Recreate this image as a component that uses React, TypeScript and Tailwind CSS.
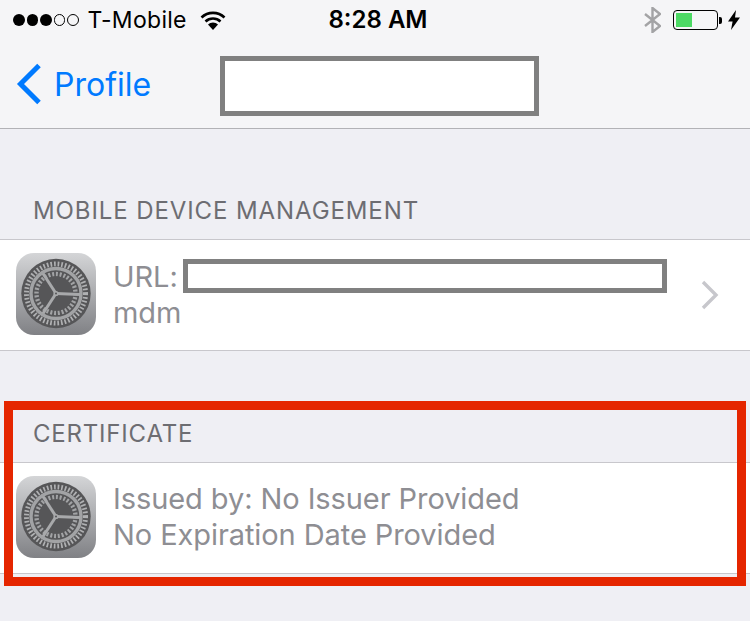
const font = "[font-family:Inter,'Liberation_Sans',sans-serif]";

function SettingsIcon() {
  const cx = 40;
  const cy = 40.5;
  return (
    <svg width="80" height="82" viewBox="0 0 80 82" className="shrink-0 -mt-[2px]">
      <defs>
        <linearGradient id="gearBg" x1="0" y1="0" x2="0" y2="1">
          <stop offset="0" stopColor="#d4d5d7" />
          <stop offset="1" stopColor="#808185" />
        </linearGradient>
      </defs>
      <rect width="80" height="82" rx="18" fill="url(#gearBg)" />
      <circle cx={cx} cy={cy} r="34.7" fill="#565658" />
      <circle cx={cx} cy={cy} r="29.5" fill="none" stroke="#b0b1b3" strokeWidth="5" strokeDasharray="1.7 1.9" />
      <circle cx={cx} cy={cy} r="27" fill="#565658" />
      <circle cx={cx} cy={cy} r="25" fill="none" stroke="#a2a3a5" strokeWidth="3.4" />
      <circle cx={cx} cy={cy} r="19.5" fill="none" stroke="#a2a3a5" strokeWidth="4.4" strokeDasharray="2 1.8" />
      <circle cx={cx} cy={cy} r="17" fill="#565658" />
      <g stroke="#a8a9ab" strokeWidth="3" strokeLinecap="butt">
        <line x1={cx} y1={cy} x2={cx + 24} y2={cy + 1} />
        <line x1={cx} y1={cy} x2={cx - 13} y2={cy + 20} />
        <line x1={cx} y1={cy} x2={cx - 13} y2={cy - 20} />
      </g>
      <circle cx={cx} cy={cy} r="2.6" fill="#a8a9ab" />
      <circle cx={cx} cy={cy} r="1" fill="#565658" />
    </svg>
  );
}

function StatusBar() {
  return (
    <div className="h-[40px] flex items-center justify-between pl-[13px] pr-[10px] text-black">
      <div className="flex items-center w-[300px]">
        <div className="flex gap-[2px]">
          <span className="w-[11.5px] h-[11.5px] rounded-full bg-black" />
          <span className="w-[11.5px] h-[11.5px] rounded-full bg-black" />
          <span className="w-[11.5px] h-[11.5px] rounded-full bg-black" />
          <span className="w-[11.5px] h-[11.5px] rounded-full border border-black" />
          <span className="w-[11.5px] h-[11.5px] rounded-full border border-black" />
        </div>
        <span className="ml-[9px] text-[23px] leading-none tracking-[0.3px]">T-Mobile</span>
        <svg width="26" height="19" viewBox="0 0 26 19" className="ml-[13px]">
          <path d="M1.5 6.5a16.5 16.5 0 0 1 23 0" fill="none" stroke="#000" strokeWidth="2.6" />
          <path d="M5.5 10.5a11 11 0 0 1 15 0" fill="none" stroke="#000" strokeWidth="2.6" />
          <path d="M8 13.6a7 7 0 0 1 10 0L13 19z" fill="#000" />
        </svg>
      </div>
      <span className="text-[24px] leading-none font-semibold ml-[3px]">8:28 AM</span>
      <div className="flex items-center w-[300px] justify-end">
        <svg width="17" height="26" viewBox="0 0 17 26" fill="none" stroke="#a3a3a5" strokeWidth="2.4">
          <path d="M1 7l15 12-7.5 6V1L16 7 1 19" />
        </svg>
        <div className="ml-[12px] w-[45px] h-[20px] rounded-[4px] border border-black p-[2px] bg-transparent">
          <div className="w-[16px] h-full bg-[#4cd964]" />
        </div>
        <span className="w-[3px] h-[7px] bg-black rounded-r-[2px] ml-[1px]" />
        <svg width="12" height="20" viewBox="0 0 12 20" className="ml-[6px]">
          <path d="M8 0L0 11.5h4.6L3 20l9-12.5H7z" fill="#000" />
        </svg>
      </div>
    </div>
  );
}

export default function App() {
  return (
    <div className={`relative w-[750px] h-[621px] overflow-hidden bg-[#efeff4] ${font}`}>
      <div className="h-[129px] bg-[#f5f5f7] border-b border-[#b2b2b6]">
        <StatusBar />
        <div className="h-[88px] flex items-center">
          <svg width="26" height="42" viewBox="0 0 26 42" className="ml-[16px] -mt-[1px]">
            <path d="M23 2.5L4.5 21 23 39.5" fill="none" stroke="#007aff" strokeWidth="5" />
          </svg>
          <span className="ml-[12px] mt-[1px] text-[#007aff] text-[32px] leading-none">Profile</span>
          <div className="ml-[69px] mt-[3px] w-[319px] h-[60px] bg-white border-[5px] border-[#808080]" />
        </div>
      </div>

      <div className="h-[110px] flex items-end pl-[33px] pb-[16px] text-[#6d6d72] text-[24px] leading-none tracking-[0.9px]">
        MOBILE DEVICE MANAGEMENT
      </div>
      <div className="h-[112px] bg-white border-y border-[#c8c7cc] flex items-center pl-[16px] pr-[30px]">
        <SettingsIcon />
        <div className="ml-[17px] flex-1 text-[#8e8e93] text-[29px] leading-[36px] -mt-[1px] tracking-[-0.08px]">
          <div className="flex items-center">
            URL:
            <div className="ml-[5px] -mt-[1px] w-[484px] h-[34px] bg-white border-[5px] border-[#808080]" />
          </div>
          <div>mdm</div>
        </div>
        <svg width="20" height="30" viewBox="0 0 20 30">
          <path d="M3 2l13 13L3 28" fill="none" stroke="#c7c7cc" strokeWidth="3.4" />
        </svg>
      </div>

      <div className="h-[111px] flex items-end pl-[33px] pb-[16px] text-[#6d6d72] text-[24px] leading-none tracking-[0.8px]">
        CERTIFICATE
      </div>
      <div className="h-[112px] bg-white border-y border-[#c8c7cc] flex items-center pl-[16px]">
        <SettingsIcon />
        <div className="ml-[17px] -mt-[3px] text-[#8e8e93] text-[29px] leading-[36px] tracking-[-0.08px]">
          <div>Issued by: No Issuer Provided</div>
          <div>No Expiration Date Provided</div>
        </div>
      </div>

      <div className="absolute left-[4px] top-[401px] w-[742px] h-[185px] border-[9px] border-[#e52600]" />
    </div>
  );
}
